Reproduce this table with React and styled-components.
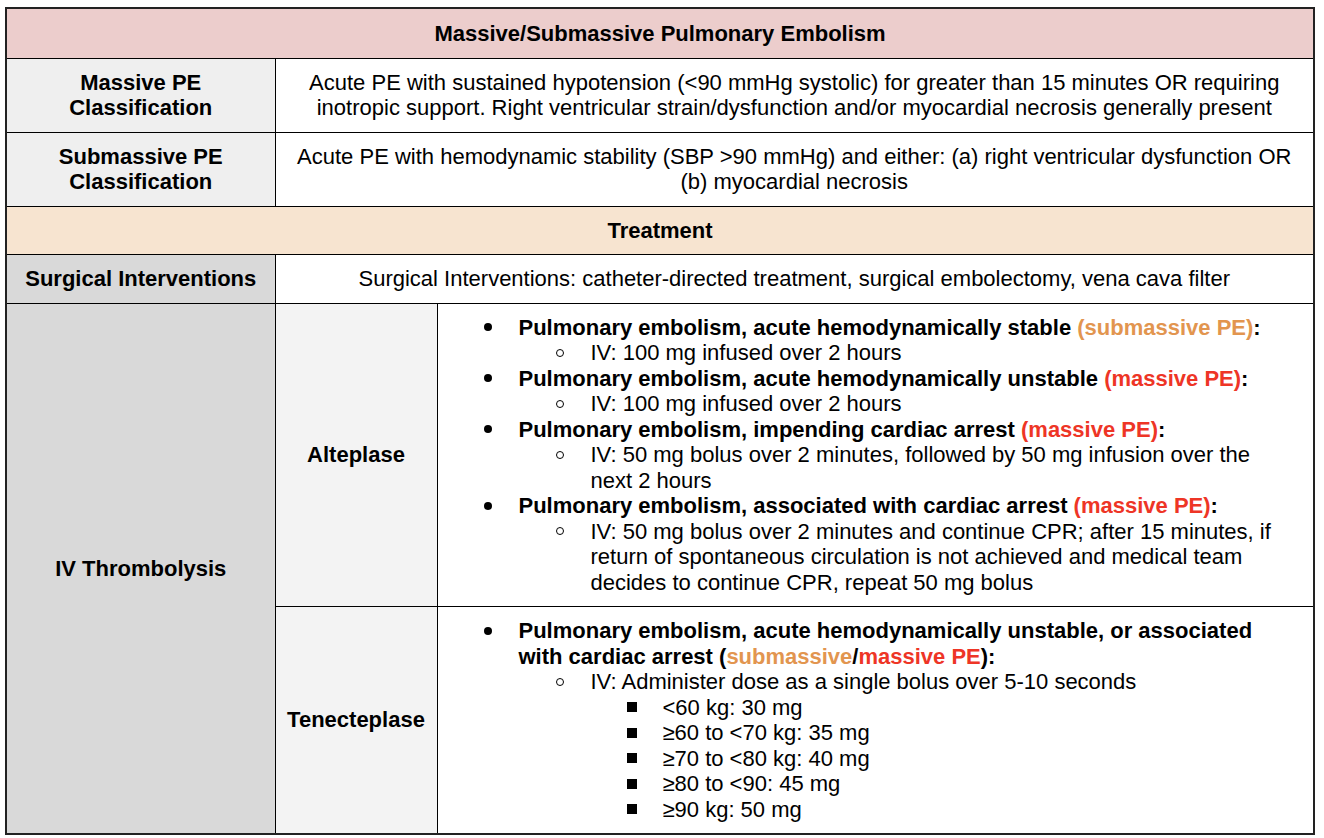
import React from 'react'
import styled, { createGlobalStyle } from 'styled-components';

const GlobalStyle = createGlobalStyle`
body{
  margin:0;
  background:#fff;
  font-family:"Liberation Sans", Arial, sans-serif;
  color:#000;
}
`;

const Table = styled.table`
border-collapse:collapse;
table-layout:fixed;
width:1310px;
margin:7px 0 0 5px;
border:2px solid #222;
font-size:22px;
line-height:25.5px;
`;

const TitleCell = styled.td`
background:${({ $bg }) => $bg};
border:1px solid #000;
text-align:center;
font-weight:bold;
padding:${({ $big }) => ($big ? '12px 10px 11px' : '11px 10px')};
`;

const LabelCell = styled.td`
background:${({ $bg }) => $bg || '#efefef'};
border:1px solid #000;
text-align:center;
vertical-align:middle;
font-weight:bold;
padding:11px 8px;
`;

const TextCell = styled.td`
border:1px solid #000;
text-align:center;
vertical-align:middle;
padding:11px 8px;
`;

const ListCell = styled.td`
border:1px solid #000;
vertical-align:middle;
padding:11px 16px 11px 0;
`;

const Item = styled.div`
display:flex;
align-items:flex-start;
margin-left:${({ $level }) => 46 + $level * 72}px;
font-weight:${({ $bold }) => ($bold ? 'bold' : 'normal')};
`;

const MarkerBox = styled.span`
flex:0 0 35px;
height:25.5px;
display:flex;
align-items:center;
`;

const Marker = styled.span`
display:block;
box-sizing:border-box;
width:${({ $kind }) => ($kind === 'square' ? '10px' : '8px')};
height:${({ $kind }) => ($kind === 'square' ? '10px' : '8px')};
margin-left:${({ $kind }) => ($kind === 'square' ? '-1px' : '0')};
border-radius:${({ $kind }) => ($kind === 'square' ? '0' : '50%')};
background:${({ $kind }) => ($kind === 'circle' ? 'transparent' : '#000')};
border:${({ $kind }) => ($kind === 'circle' ? '1px solid #000' : 'none')};
`;

const ItemText = styled.span`
flex:1;
`;

const Orange = styled.span`
color:#e2954f;
`;

const Red = styled.span`
color:#ee3526;
`;

const kinds = ['disc', 'circle', 'square'];

const Bullet = ({ level = 0, bold, children }) => (
  <Item $level={level} $bold={bold}>
    <MarkerBox><Marker $kind={kinds[level]} /></MarkerBox>
    <ItemText>{children}</ItemText>
  </Item>
);

const App = () => {
  return (
    <>
      <GlobalStyle />
      <Table>
        <colgroup>
          <col style={{ width: '269px' }} />
          <col style={{ width: '162px' }} />
          <col />
        </colgroup>
        <tbody>
          <tr>
            <TitleCell colSpan={3} $bg="#eccdcc" $big>Massive/Submassive Pulmonary Embolism</TitleCell>
          </tr>
          <tr>
            <LabelCell>Massive PE<br />Classification</LabelCell>
            <TextCell colSpan={2}>
              Acute PE with sustained hypotension (&lt;90 mmHg systolic) for greater than 15 minutes OR requiring inotropic support. Right ventricular strain/dysfunction and/or myocardial necrosis generally present
            </TextCell>
          </tr>
          <tr>
            <LabelCell>Submassive PE<br />Classification</LabelCell>
            <TextCell colSpan={2}>
              Acute PE with hemodynamic stability (SBP &gt;90 mmHg) and either: (a) right ventricular dysfunction OR (b) myocardial necrosis
            </TextCell>
          </tr>
          <tr>
            <TitleCell colSpan={3} $bg="#f7e4d0">Treatment</TitleCell>
          </tr>
          <tr>
            <LabelCell $bg="#d9d9d9">Surgical Interventions</LabelCell>
            <TextCell colSpan={2}>
              Surgical Interventions: catheter-directed treatment, surgical embolectomy, vena cava filter
            </TextCell>
          </tr>
          <tr>
            <LabelCell $bg="#d9d9d9" rowSpan={2}>IV Thrombolysis</LabelCell>
            <LabelCell $bg="#f3f3f3">Alteplase</LabelCell>
            <ListCell>
              <Bullet bold>Pulmonary embolism, acute hemodynamically stable <Orange>(submassive PE)</Orange>:</Bullet>
              <Bullet level={1}>IV: 100 mg infused over 2 hours</Bullet>
              <Bullet bold>Pulmonary embolism, acute hemodynamically unstable <Red>(massive PE)</Red>:</Bullet>
              <Bullet level={1}>IV: 100 mg infused over 2 hours</Bullet>
              <Bullet bold>Pulmonary embolism, impending cardiac arrest <Red>(massive PE)</Red>:</Bullet>
              <Bullet level={1}>IV: 50 mg bolus over 2 minutes, followed by 50 mg infusion over the next 2 hours</Bullet>
              <Bullet bold>Pulmonary embolism, associated with cardiac arrest <Red>(massive PE)</Red>:</Bullet>
              <Bullet level={1}>IV: 50 mg bolus over 2 minutes and continue CPR; after 15 minutes, if return of spontaneous circulation is not achieved and medical team decides to continue CPR, repeat 50 mg bolus</Bullet>
            </ListCell>
          </tr>
          <tr>
            <LabelCell $bg="#f3f3f3">Tenecteplase</LabelCell>
            <ListCell>
              <Bullet bold>Pulmonary embolism, acute hemodynamically unstable, or associated with cardiac arrest (<Orange>submassive</Orange>/<Red>massive PE</Red>):</Bullet>
              <Bullet level={1}>IV: Administer dose as a single bolus over 5-10 seconds</Bullet>
              <Bullet level={2}>&lt;60 kg: 30 mg</Bullet>
              <Bullet level={2}>≥60 to &lt;70 kg: 35 mg</Bullet>
              <Bullet level={2}>≥70 to &lt;80 kg: 40 mg</Bullet>
              <Bullet level={2}>≥80 to &lt;90: 45 mg</Bullet>
              <Bullet level={2}>≥90 kg: 50 mg</Bullet>
            </ListCell>
          </tr>
        </tbody>
      </Table>
    </>
  );
};

export default App;
